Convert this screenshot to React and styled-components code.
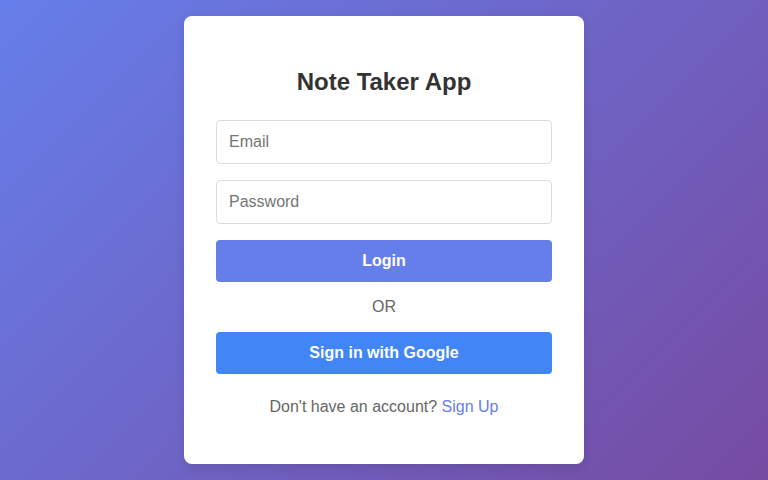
import React from "react";
import styled, { createGlobalStyle } from "styled-components";

const Global = createGlobalStyle`
  * { box-sizing: border-box; }
  html, body { margin: 0; padding: 0; }
  body { font-family: "Liberation Sans", Arial, sans-serif; }
`;

const Page = styled.div`
  min-height: 100vh;
  display: flex;
  align-items: center;
  justify-content: center;
  background: linear-gradient(135deg, #667eea 0%, #764ba2 100%);
`;

const Card = styled.div`
  width: 400px;
  background: #fff;
  border-radius: 8px;
  padding: 32px;
  box-shadow: 0 4px 12px rgba(0, 0, 0, 0.1);
  display: flex;
  flex-direction: column;
`;

const Title = styled.h1`
  margin: 20px 0 24px;
  font-size: 24px;
  line-height: 28px;
  font-weight: bold;
  color: #333;
  text-align: center;
`;

const Form = styled.form`
  display: flex;
  flex-direction: column;
  gap: 16px;
  margin: 0;
`;

const Input = styled.input`
  height: 44px;
  width: 100%;
  padding: 0 12px;
  border: 1px solid #ddd;
  border-radius: 4px;
  font-family: inherit;
  font-size: 16px;
  color: #333;
  outline: none;
  &::placeholder { color: #757575; }
`;

const Button = styled.button`
  height: 42px;
  width: 100%;
  border: none;
  border-radius: 4px;
  background: ${(p) => p.$bg};
  color: #fff;
  font-family: inherit;
  font-size: 16px;
  font-weight: bold;
  cursor: pointer;
`;

const Or = styled.div`
  margin: 16px 0;
  text-align: center;
  font-size: 16px;
  line-height: 18px;
  color: #666;
`;

const Footer = styled.p`
  margin: 24px 0 16px;
  text-align: center;
  font-size: 16px;
  line-height: 18px;
  color: #666;
`;

const Link = styled.a`
  color: #667eea;
  text-decoration: none;
  cursor: pointer;
`;

export default function App() {
  return (
    <>
      <Global />
      <Page>
        <Card>
          <Title>Note Taker App</Title>
          <Form onSubmit={(e) => e.preventDefault()}>
            <Input type="email" placeholder="Email" />
            <Input type="password" placeholder="Password" />
            <Button type="submit" $bg="#667eea">Login</Button>
          </Form>
          <Or>OR</Or>
          <Button type="button" $bg="#4285f4">Sign in with Google</Button>
          <Footer>
            Don't have an account? <Link>Sign Up</Link>
          </Footer>
        </Card>
      </Page>
    </>
  );
}
